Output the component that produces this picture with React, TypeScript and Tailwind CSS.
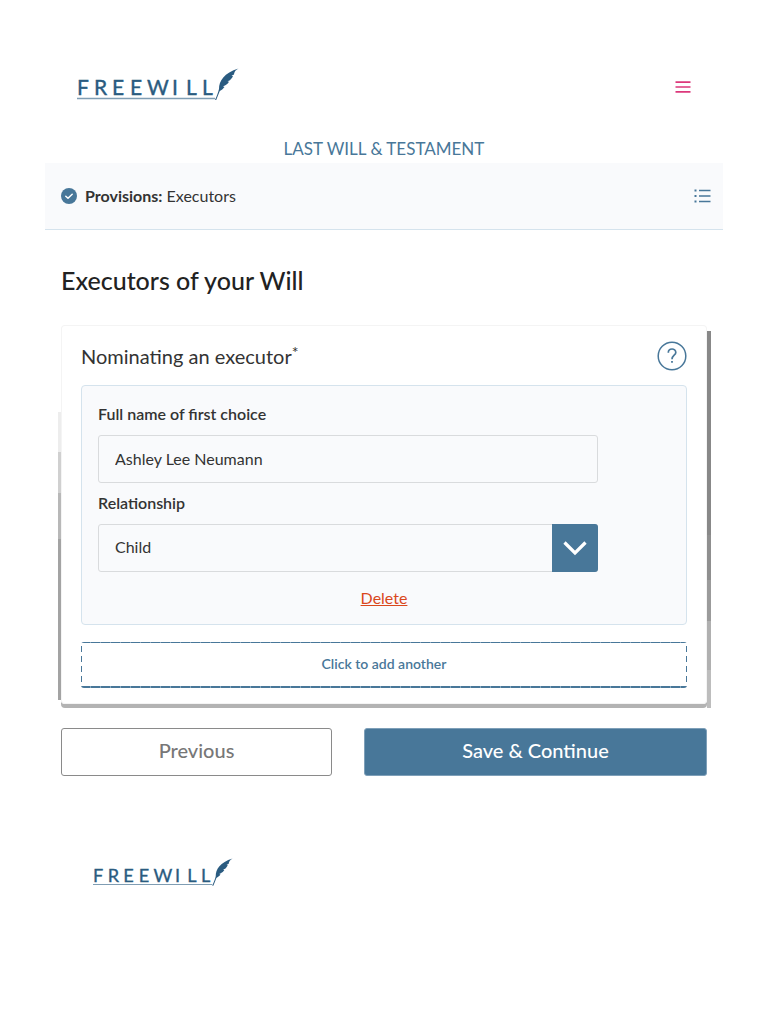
import React from "react";

function Logo({ className }: { className: string }) {
  return (
    <svg viewBox="0 0 162 32" className={className} role="img" aria-label="FreeWill">
      <text
        x="0 17 35 53 70 95 109 125"
        y="27"
        fill="#2a5b80"
        stroke="#2a5b80"
        strokeWidth="0.4"
        fontSize="21"
        fontFamily="Lato, 'Liberation Sans', sans-serif"
      >
        FREEWILL
      </text>
      <path d="M0 30.500H138" stroke="#7f9db3" strokeWidth="1.3" />
      <path
        d="M138 32C140 27.500 141 25 142 21C142 13 147 5 161.500 0.500C158 2.500 157.500 4 157 6.500L154.500 7.800L156 8.200C155 10 154 11 153 12.200L150.500 13.200L152 13.700C151 15.500 149.500 16.500 148 17.500L146 18.200L147.500 19C146 21 144.500 22 142.800 23C141.500 26 140.500 29 139.200 32Z"
        fill="#2a5b80"
      />
    </svg>
  );
}

function CheckBadge() {
  return (
    <svg viewBox="0 0 16 16" className="size-4 shrink-0" aria-hidden="true">
      <circle cx="8" cy="8" r="8" fill="#487799" />
      <path d="M4.800 8.200L7 10.300L11.200 6.200" fill="none" stroke="#fff" strokeWidth="1.500" strokeLinecap="round" strokeLinejoin="round" />
    </svg>
  );
}

export default function App() {
  return (
    <div className="bg-white px-[45px] pt-[68px] pb-[136px] font-[Lato,'Open_Sans',sans-serif] text-base leading-6 text-[#333]">
      <header className="flex items-start justify-between px-8">
        <a href="#home">
          <Logo className="h-8 w-[162px] overflow-visible" />
        </a>
        <button type="button" aria-label="Open menu" className="mt-[11px] flex h-4 items-center">
          <svg viewBox="0 0 16 12" className="h-3 w-4" stroke="#dc387b" strokeWidth="1.700" aria-hidden="true">
            <path d="M0.500 1.200H15.500M0.500 6H15.500M0.500 10.800H15.500" />
          </svg>
        </button>
      </header>

      <main>
        <p className="mt-[37px] text-center text-[17px] text-[#487799]">LAST WILL &amp; TESTAMENT</p>
        <nav className="mt-0.5 flex h-[67px] items-center justify-between border-b border-[#d5e3ed] bg-[#f9fafc] pr-3 pl-4">
          <p className="flex items-center gap-2">
            <CheckBadge />
            <span>
              <b className="font-bold">Provisions:</b> Executors
            </span>
          </p>
          <button type="button" aria-label="Show sections">
            <svg viewBox="0 0 17 14" className="h-[14px] w-[17px]" fill="none" stroke="#487799" strokeWidth="1.400" aria-hidden="true">
              <path d="M5 1.500H16.500M5 7H16.500M5 12.500H16.500" />
              <path d="M0.500 1.500H2.500M0.500 7H2.500M0.500 12.500H2.500" strokeWidth="2" />
            </svg>
          </button>
        </nav>

        <form className="px-4" onSubmit={(e) => e.preventDefault()}>
          <h1 className="mt-[34px] text-[25px] leading-8 font-medium text-[#222]">Executors of your Will</h1>

          <section className="relative mt-[29px] rounded bg-white px-5 py-4 shadow-[0_4px_0_#b3b3b3,inset_0_0_0_1px_#f4f4f4]">
            <span aria-hidden="true" className="absolute top-1.5 -right-1 -bottom-1 w-1 bg-[linear-gradient(#888_0_54%,#8f8f8f_54%_66%,#9b9b9b_66%_77%,#b0b0b0_77%_90%,#bdbdbd_90%)]" />
            <span aria-hidden="true" className="absolute top-[87px] bottom-1 -left-[3px] w-[3px] bg-[linear-gradient(#ededed_0_14%,#d0d0d0_14%_28%,#b8b8b8_28%_44%,#a3a3a3_44%)]" />
            <div className="flex items-center justify-between">
              <h2 className="text-xl leading-7">
                Nominating an executor<span className="relative -top-1.5 text-base leading-none">*</span>
              </h2>
              <button type="button" aria-label="Help">
                <svg viewBox="0 0 30 30" className="size-[30px]" fill="none" stroke="#487799" strokeWidth="1.500" aria-hidden="true">
                  <circle cx="15" cy="15" r="13.800" />
                  <path d="M11.300 11.700C11.300 6.700 18.800 6.900 18.800 11.400C18.800 14.300 15 14.200 15 18.200" strokeWidth="1.700" />
                  <path d="M15 19.900V21.700" strokeWidth="1.800" />
                </svg>
              </button>
            </div>

            <div className="mt-3.5 rounded border border-[#d5e3ed] bg-[#f9fafc] px-4 pt-4 pb-[14px]">
              <div className="mr-[72px]">
                <label htmlFor="fullName" className="block font-semibold">Full name of first choice</label>
                <input
                  id="fullName"
                  defaultValue="Ashley Lee Neumann"
                  className="mt-[9px] block h-12 w-full rounded-[3px] border border-[#d9dbdd] bg-transparent px-4 pb-0.5"
                />
                <label htmlFor="relationship" className="mt-2 block font-semibold">Relationship</label>
                <div className="relative mt-[9px]">
                  <select
                    id="relationship"
                    defaultValue="Child"
                    className="block h-12 w-full appearance-none rounded-[3px] border border-[#d9dbdd] bg-transparent pr-14 pb-0.5 pl-4"
                  >
                    <option>Child</option>
                  </select>
                  <span className="pointer-events-none absolute inset-y-0 right-0 flex w-[46px] items-center justify-center rounded-r-[3px] bg-[#487799]">
                    <svg viewBox="0 0 24 16" className="h-4 w-6" fill="none" stroke="#fff" strokeWidth="3.200" aria-hidden="true">
                      <path d="M1.500 2.500L12 13L22.500 2.500" />
                    </svg>
                  </span>
                </div>
              </div>
              <div className="mt-[14px] text-center">
                <button type="button" className="text-[#d9481c] underline">Delete</button>
              </div>
            </div>

            <button
              type="button"
              className="mt-[17px] block h-[46px] w-full rounded-[3px] bg-[linear-gradient(90deg,#487799_90%,#86a7be_90%),linear-gradient(90deg,#487799_90%,#86a7be_90%),linear-gradient(transparent_4px,#487799_4px),linear-gradient(transparent_4px,#487799_4px)] bg-[size:10px_1px,10px_2px,1px_10px,1px_10px] bg-[position:left_top,left_bottom,left_top,right_top] [background-repeat:repeat-x,repeat-x,repeat-y,repeat-y] pb-0.5 text-sm font-semibold text-[#487799]"
            >
              Click to add another
            </button>
          </section>

          <div className="mt-6 grid grid-cols-[271fr_343fr] gap-8 text-xl font-medium">
            <button type="button" className="h-12 rounded-[3px] border border-[#8a8a8a] pb-1 text-[#777]">Previous</button>
            <button type="submit" className="h-12 rounded-[3px] border border-[#7e9fb8] bg-[#487799] pb-1 text-white">Save &amp; Continue</button>
          </div>
        </form>
      </main>

      <footer className="mt-[82px] px-12">
        <a href="#home" className="block w-fit">
          <Logo className="h-7 w-[140px] overflow-visible" />
        </a>
      </footer>
    </div>
  );
}
